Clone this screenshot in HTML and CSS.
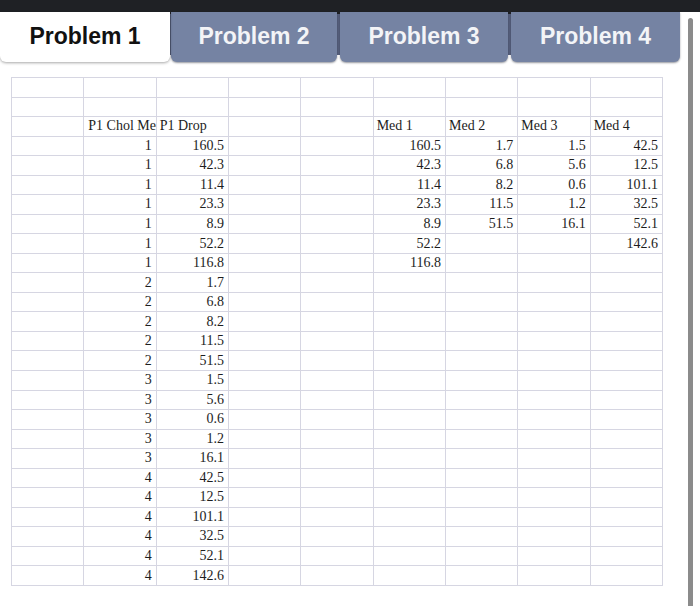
FILE: index.html
```html
<!DOCTYPE html>
<html>
<head>
<meta charset="utf-8">
<link rel="stylesheet" href="styles.css">
</head>
<body>
<div class="topbar"></div>
<nav class="tabs">
  <div class="tab active">Problem 1</div>
  <div class="tab t2">Problem 2</div>
  <div class="tab t3">Problem 3</div>
  <div class="tab t4">Problem 4</div>
</nav>
<div class="sheet">
<table class="grid">
<colgroup><col><col><col><col><col><col><col><col><col></colgroup>
<tbody>
<tr><td></td><td></td><td></td><td></td><td></td><td></td><td></td><td></td><td></td></tr>
<tr><td></td><td></td><td></td><td></td><td></td><td></td><td></td><td></td><td></td></tr>
<tr><td></td><td class="h">P1 Chol Medication</td><td class="h">P1 Drop</td><td></td><td></td><td class="h">Med 1</td><td class="h">Med 2</td><td class="h">Med 3</td><td class="h">Med 4</td></tr>
<tr><td></td><td>1</td><td>160.5</td><td></td><td></td><td>160.5</td><td>1.7</td><td>1.5</td><td>42.5</td></tr>
<tr><td></td><td>1</td><td>42.3</td><td></td><td></td><td>42.3</td><td>6.8</td><td>5.6</td><td>12.5</td></tr>
<tr><td></td><td>1</td><td>11.4</td><td></td><td></td><td>11.4</td><td>8.2</td><td>0.6</td><td>101.1</td></tr>
<tr><td></td><td>1</td><td>23.3</td><td></td><td></td><td>23.3</td><td>11.5</td><td>1.2</td><td>32.5</td></tr>
<tr><td></td><td>1</td><td>8.9</td><td></td><td></td><td>8.9</td><td>51.5</td><td>16.1</td><td>52.1</td></tr>
<tr><td></td><td>1</td><td>52.2</td><td></td><td></td><td>52.2</td><td></td><td></td><td>142.6</td></tr>
<tr><td></td><td>1</td><td>116.8</td><td></td><td></td><td>116.8</td><td></td><td></td><td></td></tr>
<tr><td></td><td>2</td><td>1.7</td><td></td><td></td><td></td><td></td><td></td><td></td></tr>
<tr><td></td><td>2</td><td>6.8</td><td></td><td></td><td></td><td></td><td></td><td></td></tr>
<tr><td></td><td>2</td><td>8.2</td><td></td><td></td><td></td><td></td><td></td><td></td></tr>
<tr><td></td><td>2</td><td>11.5</td><td></td><td></td><td></td><td></td><td></td><td></td></tr>
<tr><td></td><td>2</td><td>51.5</td><td></td><td></td><td></td><td></td><td></td><td></td></tr>
<tr><td></td><td>3</td><td>1.5</td><td></td><td></td><td></td><td></td><td></td><td></td></tr>
<tr><td></td><td>3</td><td>5.6</td><td></td><td></td><td></td><td></td><td></td><td></td></tr>
<tr><td></td><td>3</td><td>0.6</td><td></td><td></td><td></td><td></td><td></td><td></td></tr>
<tr><td></td><td>3</td><td>1.2</td><td></td><td></td><td></td><td></td><td></td><td></td></tr>
<tr><td></td><td>3</td><td>16.1</td><td></td><td></td><td></td><td></td><td></td><td></td></tr>
<tr><td></td><td>4</td><td>42.5</td><td></td><td></td><td></td><td></td><td></td><td></td></tr>
<tr><td></td><td>4</td><td>12.5</td><td></td><td></td><td></td><td></td><td></td><td></td></tr>
<tr><td></td><td>4</td><td>101.1</td><td></td><td></td><td></td><td></td><td></td><td></td></tr>
<tr><td></td><td>4</td><td>32.5</td><td></td><td></td><td></td><td></td><td></td><td></td></tr>
<tr><td></td><td>4</td><td>52.1</td><td></td><td></td><td></td><td></td><td></td><td></td></tr>
<tr><td></td><td>4</td><td>142.6</td><td></td><td></td><td></td><td></td><td></td><td></td></tr>
</tbody>
</table>
</div>
<div class="scrollbar"></div>
</body>
</html>
```
FILE: styles.css
```css
html, body {
  margin: 0;
  padding: 0;
  background: #ffffff;
  width: 700px;
  height: 606px;
  overflow: hidden;
}
body {
  position: relative;
  font-family: "Liberation Serif", "Times New Roman", serif;
}
.topbar {
  height: 12px;
  background: #1f2125;
}
.tabs {
  display: flex;
  width: 680px;
  height: 50px;
  background: linear-gradient(#1f2125 0, #1f2125 2px, #58627f 2px, #58627f 43px, #ffffff 43px);
}
.tab {
  display: flex;
  align-items: center;
  justify-content: center;
  font-family: "Liberation Sans", Arial, sans-serif;
  font-weight: bold;
  font-size: 23px;
  color: #f3f4f7;
  background: #7583a3;
  border-radius: 0 0 6px 6px;
  box-shadow: 0 1px 2px rgba(20, 25, 40, 0.45);
  padding-bottom: 1px;
  box-sizing: border-box;
}
.tab.active {
  width: 170px;
  margin-right: 1px;
  background: #ffffff;
  color: #111111;
  box-shadow: 0 1px 3px rgba(0, 0, 0, 0.35);
  position: relative;
  z-index: 1;
}
.tab.t2 { width: 166px; margin-right: 3px; }
.tab.t3 { width: 168px; margin-right: 3px; }
.tab.t4 { width: 169px; }
.sheet {
  padding: 15px 0 0 11px;
}
.grid {
  border-collapse: collapse;
  table-layout: fixed;
  width: 651px;
  font-size: 14px;
  color: #1d1d1d;
}
.grid col { width: 72.33px; }
.grid tr { height: 19.54px; }
.grid td {
  border: 1px solid #d6d6e2;
  padding: 0 4px 0 3px;
  text-align: right;
  white-space: nowrap;
  overflow: hidden;
  line-height: 16px;
  vertical-align: middle;
}
.grid td.h {
  text-align: left;
  padding-left: 3px;
  text-overflow: clip;
}
.grid td.h:first-child,
.grid tr td.h:nth-child(2) {
  padding-left: 4px;
}
.scrollbar {
  position: absolute;
  left: 688px;
  top: 18px;
  width: 5px;
  height: 590px;
  border-radius: 3px;
  background: #8b8b8b;
}
```
